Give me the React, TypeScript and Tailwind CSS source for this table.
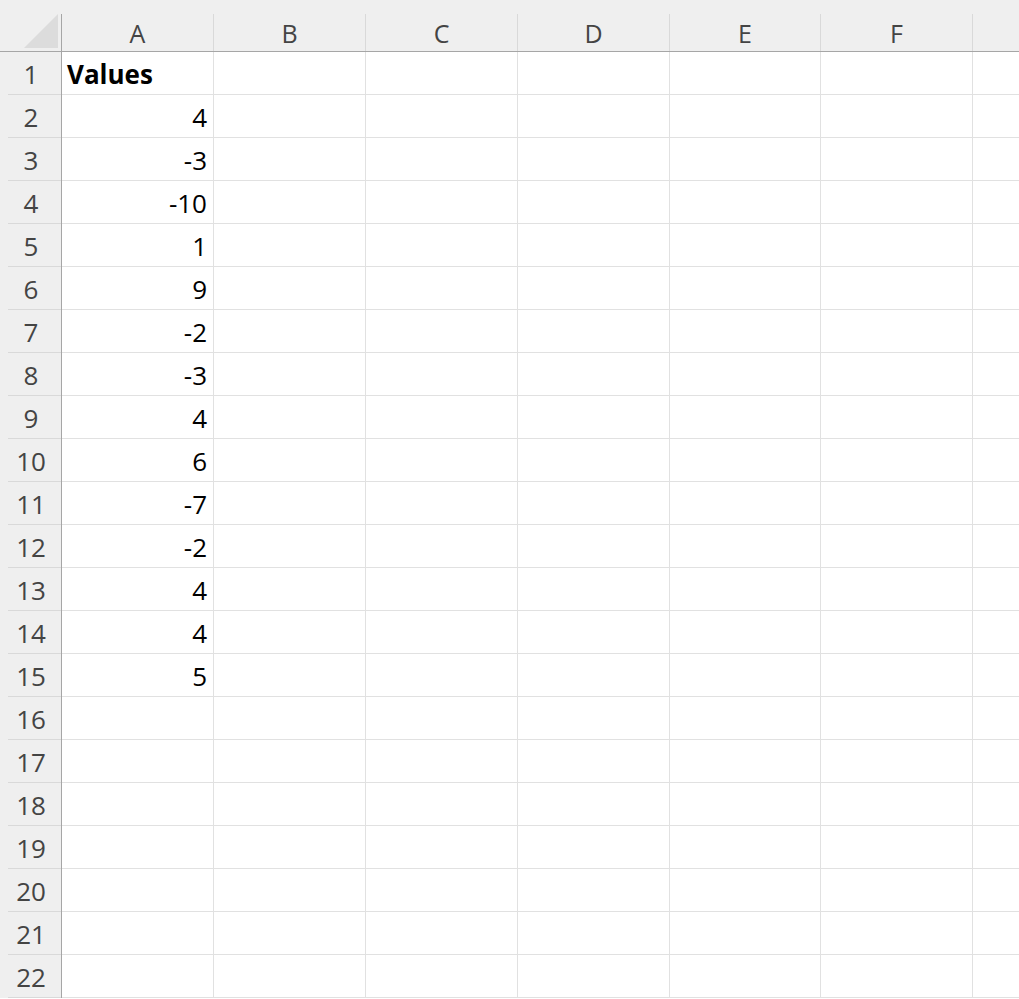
import React from "react";

const columns = [
  { label: "A", w: "w-[152px]" },
  { label: "B", w: "w-[152px]" },
  { label: "C", w: "w-[152px]" },
  { label: "D", w: "w-[152px]" },
  { label: "E", w: "w-[151px]" },
  { label: "F", w: "w-[152px]" },
  { label: "", w: "w-[60px]" },
];

const values: (string | null)[] = [
  "Values", "4", "-3", "-10", "1", "9", "-2", "-3", "4", "6", "-7", "-2", "4", "4", "5",
  null, null, null, null, null, null, null,
];

const font = { fontFamily: '"Open Sans", "Noto Sans", sans-serif' };

function Corner() {
  return (
    <div className="flex h-[51px] w-[62px] shrink-0 flex-col">
      <div className="h-[14px]" />
      <div className="flex flex-1 items-start justify-end border-r border-[#a6a6a6] pr-[3px]">
        <svg width="34" height="34" viewBox="0 0 34 34">
          <polygon points="34,0 34,34 0,34" fill="#dcdcdc" />
        </svg>
      </div>
    </div>
  );
}

export default function App() {
  return (
    <div className="h-[999px] w-[1019px] overflow-hidden bg-white text-[#444]" style={font}>
      {/* column headers */}
      <div className="flex h-[52px] border-b border-[#a6a6a6] bg-[#efefef]">
        <Corner />
        {columns.map((c, i) => (
          <div key={i} className={`${c.w} flex shrink-0 flex-col`}>
            <div className="h-[14px]" />
            <div className="flex flex-1 items-center justify-center border-r border-[#d9d9d9] pt-[1px] text-[25px] leading-none">
              {c.label}
            </div>
          </div>
        ))}
      </div>

      {/* rows */}
      {values.map((v, r) => (
        <div key={r} className="flex h-[43px]">
          <div className="flex w-[62px] shrink-0 border-r border-[#a6a6a6] bg-[#efefef]">
            <div className="w-[8px]" />
            <div className="flex flex-1 items-center justify-center border-b border-[#d9d9d9] pr-[7px] pt-[1px] text-[26px] leading-none">
              {r + 1}
            </div>
          </div>
          {columns.map((c, i) => {
            const isA = i === 0;
            const isHeader = r === 0 && isA;
            return (
              <div
                key={i}
                className={`${c.w} flex shrink-0 items-center border-b border-r border-[#e1e1e1] pt-[2px] text-[26px] leading-none text-black ${
                  isHeader ? "justify-start pl-[5px] font-bold" : "justify-end pr-[6px]"
                }`}
              >
                {isA && v}
              </div>
            );
          })}
        </div>
      ))}
    </div>
  );
}
